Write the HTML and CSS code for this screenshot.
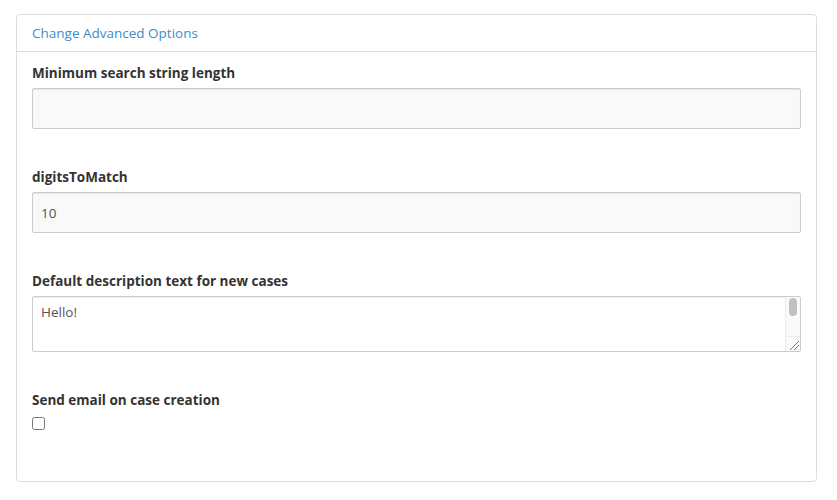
FILE: index.html
```html
<!DOCTYPE html>
<html>
<head>
<meta charset="utf-8">
<link rel="stylesheet" href="styles.css">
</head>
<body>
<div class="panel">
  <div class="panel-heading"><a class="heading-link" href="#">Change Advanced Options</a></div>
  <div class="panel-body">
    <div class="form-group">
      <label class="control-label">Minimum search string length</label>
      <input class="form-control" type="text" value="">
    </div>
    <div class="form-group">
      <label class="control-label">digitsToMatch</label>
      <input class="form-control" type="text" value="10">
    </div>
    <div class="form-group">
      <label class="control-label">Default description text for new cases</label>
      <div class="textarea-wrap">
        <textarea class="form-control textarea">Hello!</textarea>
        <div class="fake-scrollbar" aria-hidden="true">
          <div class="fake-track"><div class="fake-thumb"></div></div>
          <div class="fake-resizer">
            <svg width="14" height="14" viewBox="0 0 14 14"><path d="M4 13 L13 4 M8 13 L13 8" stroke="#7a7a7a" stroke-width="1" fill="none"/></svg>
          </div>
        </div>
      </div>
    </div>
    <div class="form-group last">
      <label class="control-label">Send email on case creation</label>
      <input class="checkbox" type="checkbox">
    </div>
  </div>
</div>
</body>
</html>
```

FILE: styles.css
```css
html, body {
  margin: 0;
  padding: 0;
  background: #ffffff;
}
body {
  padding: 14px 20px 0 16px;
  font-family: "Open Sans", "Liberation Sans", sans-serif;
  font-size: 13.5px;
  color: #333333;
}
.panel {
  border: 1px solid #dddddd;
  border-radius: 4px;
  height: 468px;
  box-sizing: border-box;
}
.panel-heading {
  height: 37px;
  box-sizing: border-box;
  border-bottom: 1px solid #dddddd;
  padding: 0 15px;
  line-height: 37px;
}
.heading-link {
  color: #428bca;
  text-decoration: none;
  font-size: 13.5px;
}
.panel-body {
  padding: 11px 15px 15px 15px;
}
.form-group {
  display: flex;
  flex-direction: column;
  align-items: flex-start;
  margin-bottom: 38px;
}
.control-label {
  font-weight: bold;
  font-size: 13.5px;
  line-height: 20px;
  margin-bottom: 5px;
  color: #333333;
}
.form-control {
  box-sizing: border-box;
  width: 769px;
  height: 41px;
  padding: 6px 8px;
  border: 1px solid #cccccc;
  border-radius: 2px;
  background: #f9f9f9;
  font-family: "Open Sans", "Liberation Sans", sans-serif;
  font-size: 13.5px;
  color: #555555;
  box-shadow: inset 0 1px 1px rgba(0,0,0,0.075);
  margin: 0;
}
.textarea-wrap {
  position: relative;
  width: 769px;
  height: 56px;
}
.textarea {
  display: block;
  height: 56px;
  resize: none;
  overflow: hidden;
  background: #ffffff;
  line-height: 20px;
  padding: 5px 8px;
}
.fake-scrollbar {
  position: absolute;
  top: 1px;
  right: 1px;
  bottom: 1px;
  width: 14px;
  border-left: 1px solid #ebebeb;
  background: #fafafa;
  display: flex;
  flex-direction: column;
  border-radius: 0 1px 1px 0;
}
.fake-track {
  flex: 1;
  padding: 1px 3px 0 3px;
}
.fake-thumb {
  width: 8px;
  height: 18px;
  border-radius: 4px;
  background: #c1c1c1;
}
.fake-resizer {
  height: 14px;
  border-top: 1px solid #ebebeb;
  display: flex;
}
.fake-resizer svg {
  display: block;
}
.checkbox {
  margin: 2px 0 0 0;
  width: 13px;
  height: 13px;
}
```
